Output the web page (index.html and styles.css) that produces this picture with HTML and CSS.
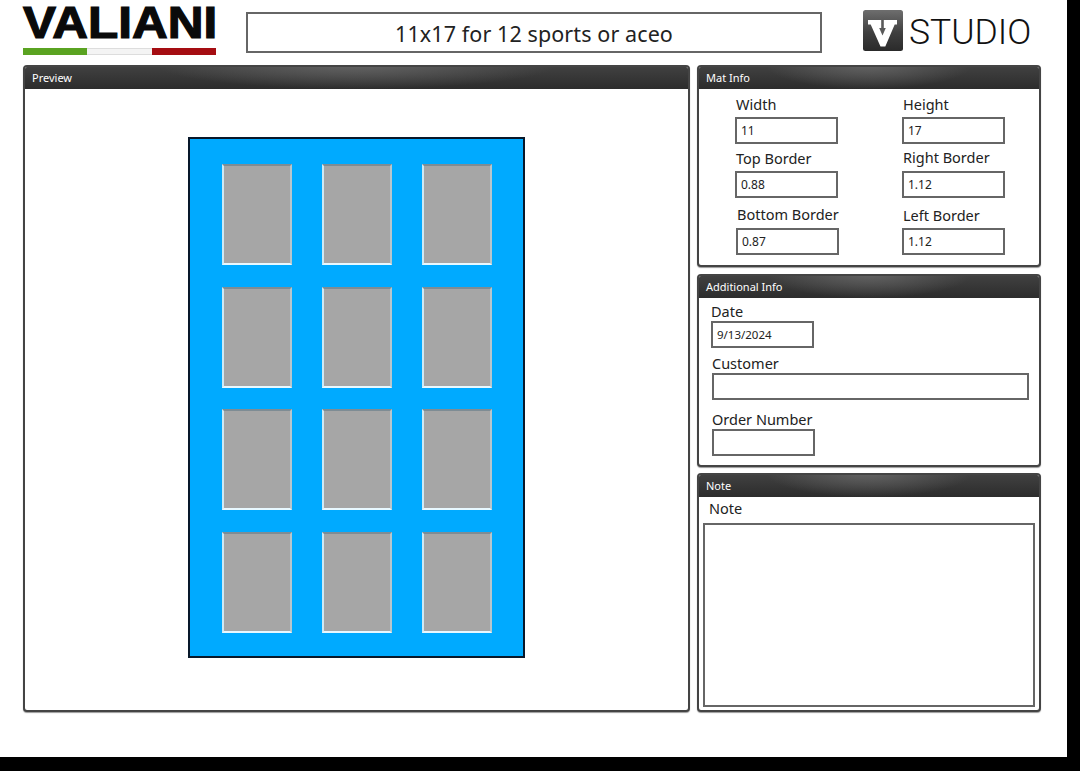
FILE: index.html
```html
<!DOCTYPE html>
<html lang="en">
<head>
<meta charset="utf-8">
<title>11x17 for 12 sports or aceo</title>
<link rel="stylesheet" href="styles.css">
</head>
<body>
<div class="page">
  <header class="top">
    <div class="brand">
      <div class="brand-name"><span>VALIANI</span></div>
      <div class="flag"><i class="green"></i><i class="white"></i><i class="red"></i></div>
    </div>
    <div class="title-box">11x17 for 12 sports or aceo</div>
    <div class="studio">
      <svg class="v-icon" viewBox="0 0 40 41" aria-hidden="true">
        <defs><linearGradient id="vg" x1="0" y1="0" x2="0" y2="1"><stop offset="0" stop-color="#6e6e6e"/><stop offset="0.55" stop-color="#3f3f3f"/><stop offset="1" stop-color="#2a2a2a"/></linearGradient></defs>
        <rect width="40" height="41" rx="2.5" fill="url(#vg)"/>
        <path d="M5 10H34V14.5H31.7L22.3 36.5H17.5L7.7 14.5H5Z" fill="#fff"/>
        <path d="M18.2 10H20.8V18H22.8L19.5 25.5L16.2 18H18.2Z" fill="#5a5a5a"/>
      </svg>
      <span class="studio-name">STUDIO</span>
    </div>
  </header>
  <main class="workspace">
    <section class="panel">
      <h2 class="panel-head">Preview</h2>
      <div class="preview-body">
        <div class="mat">
          <div class="opening"></div><div class="opening"></div><div class="opening"></div>
          <div class="opening"></div><div class="opening"></div><div class="opening"></div>
          <div class="opening"></div><div class="opening"></div><div class="opening"></div>
          <div class="opening"></div><div class="opening"></div><div class="opening"></div>
        </div>
      </div>
    </section>
    <div class="side">
      <section class="panel">
        <h2 class="panel-head">Mat Info</h2>
        <div class="mat-info">
          <div class="field"><div class="label">Width</div><div class="box short">11</div></div>
          <div class="field"><div class="label">Height</div><div class="box short">17</div></div>
          <div class="field"><div class="label">Top Border</div><div class="box short">0.88</div></div>
          <div class="field raised"><div class="label">Right Border</div><div class="box short">1.12</div></div>
          <div class="field nudged"><div class="label">Bottom Border</div><div class="box short">0.87</div></div>
          <div class="field lowered"><div class="label">Left Border</div><div class="box short">1.12</div></div>
        </div>
      </section>
      <section class="panel">
        <h2 class="panel-head">Additional Info</h2>
        <div class="add-info">
          <div class="field date"><div class="label">Date</div><div class="box short date-box">9/13/2024</div></div>
          <div class="field customer"><div class="label">Customer</div><div class="box"></div></div>
          <div class="field order"><div class="label">Order Number</div><div class="box short"></div></div>
        </div>
      </section>
      <section class="panel">
        <h2 class="panel-head">Note</h2>
        <div class="note-body">
          <div class="label note-label">Note</div>
          <div class="note-area"></div>
        </div>
      </section>
    </div>
  </main>
</div>
</body>
</html>
```
FILE: styles.css
```css
* { box-sizing: border-box; }
html, body { margin: 0; height: 771px; overflow: hidden; background: #000; }
body { font-family: "Noto Sans", "Open Sans", sans-serif; color: #222; }
.page { width: 1067px; height: 757px; background: #fff; padding: 0 0 0 23px; }

.top { height: 65px; display: flex; align-items: flex-start; }
.brand { width: 193px; padding-top: 2px; }
.brand-name { height: 42px; font: 700 44px/42px "Liberation Sans", Arial, sans-serif; color: #0a0a0a; -webkit-text-stroke: 1.2px #0a0a0a; white-space: nowrap; }
.brand-name span { display: inline-block; transform: scaleX(1.125); transform-origin: left center; }
.flag { display: flex; height: 7px; margin-top: 4px; }
.flag i { display: block; flex: 1; }
.flag .green { background: #5aa321; }
.flag .white { background: #f4f4f4; border-top: 1px solid #ddd; border-bottom: 1px solid #ddd; }
.flag .red { background: #a50d12; }
.title-box { width: 576px; height: 41px; margin: 12px 0 0 30px; border: 2px solid #666; text-align: center; font-size: 21.5px; line-height: 40px; color: #222; letter-spacing: 0.1px; }
.studio { display: flex; align-items: flex-start; margin: 10px 0 0 41px; }
.v-icon { width: 40px; height: 41px; display: block; }
.studio-name { margin: 2px 0 0 6px; font: 300 35.5px/41px Roboto, sans-serif; color: #111; }

.workspace { display: grid; grid-template-columns: 667px 344px; column-gap: 7px; height: 647px; }
.side { display: grid; grid-template-rows: 202px 193px 239px; row-gap: 6.5px; }
.panel { border: 2px solid #444; border-radius: 4px; box-shadow: 0 1px 1px #999; background: #fff; display: flex; flex-direction: column; overflow: hidden; }
.panel-head { margin: -2px -2px 0; height: 24px; flex: none; padding-left: 9px; font-size: 11px; font-weight: 400; line-height: 25px; color: #fff; background: radial-gradient(ellipse 30% 100% at 50% 0, #626262, rgba(98,98,98,0) 100%), linear-gradient(#424242, #2c2c2c); }

.preview-body { flex: 1; display: flex; justify-content: center; padding-top: 48px; }
.mat { width: 337px; height: 521px; border: 2px solid #08182a; background: #00aaff; padding: 25px 32px 0; display: grid; grid-template-columns: repeat(3, 70px); grid-auto-rows: 101px; column-gap: 30px; row-gap: 21.5px; }
.opening { background: #a6a6a6; border-style: solid; border-width: 2px; border-color: #7e8c94 #b9c6cc #e8f8ff #cdeaf6; }

.label { font-size: 14.5px; line-height: 18px; color: #222; white-space: nowrap; }
.box { height: 27px; border: 2px solid #666; padding-left: 4px; font-size: 12px; line-height: 23px; color: #222; background: #fff; }
.short { width: 103px; }
.field { display: flex; flex-direction: column; gap: 4px; }

.mat-info { display: grid; grid-template-columns: 167px 103px; grid-auto-rows: 54px; padding: 6px 0 0 36px; }
.mat-info .label { padding-left: 1px; }
.mat-info .raised { margin-top: -1px; gap: 5px; }
.mat-info .nudged { margin: 2px 0 0 1px; gap: 5px; }
.mat-info .lowered { margin-top: 3px; }

.add-info { padding: 4px 10px 0 12px; }
.add-info .date { gap: 1px; }
.date-box { font-size: 11.5px; }
.add-info .customer { margin: 6px 0 0 1px; gap: 1px; }
.add-info .customer .box { width: 317px; }
.add-info .order { margin: 10px 0 0 1px; gap: 1px; }

.note-body { flex: 1; padding: 2px 4px 3px 4px; display: flex; flex-direction: column; }
.note-label { padding-left: 6px; }
.note-area { width: 332px; flex: 1; margin: 6px 0 0; border: 2px solid #666; background: #fff; }
```
